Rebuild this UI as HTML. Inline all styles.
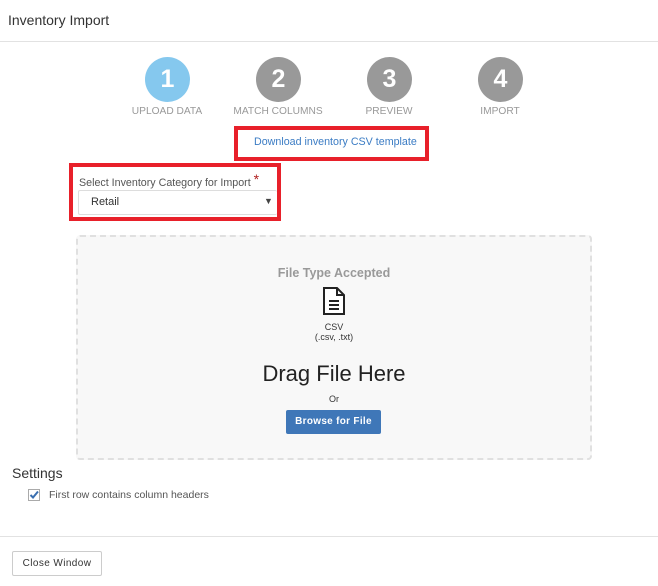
<html><head><style>
body{margin:0;width:658px;height:586px;background:#fff;font-family:"Liberation Sans",sans-serif;position:relative;overflow:hidden}
.a{position:absolute}
.c{width:45px;height:45px;border-radius:50%;background:#999;color:#fff;font-size:25px;font-weight:bold;text-align:center;line-height:45px}
.l{font-size:10.2px;color:#999;text-align:center;width:120px}
</style></head><body>
<div class="a" style="left:8px;top:12px;font-size:14px;color:#333">Inventory Import</div>
<div class="a" style="left:0;top:41px;width:658px;height:1px;background:#e2e2e2"></div>
<div class="a c" style="left:145px;top:57px;background:#85c8ee">1</div>
<div class="a c" style="left:256px;top:57px">2</div>
<div class="a c" style="left:367px;top:57px">3</div>
<div class="a c" style="left:478px;top:57px">4</div>
<div class="a l" style="left:107px;top:106px">UPLOAD DATA</div>
<div class="a l" style="left:218px;top:106px">MATCH COLUMNS</div>
<div class="a l" style="left:329px;top:106px">PREVIEW</div>
<div class="a l" style="left:440px;top:106px">IMPORT</div>
<div class="a" style="left:234px;top:126px;width:187px;height:27px;border:4px solid #e8202a"></div>
<div class="a" style="left:254px;top:136px;font-size:10.7px;color:#3b7cc4">Download inventory CSV template</div>
<div class="a" style="left:69px;top:163px;width:204px;height:50px;border:4px solid #e8202a"></div>
<div class="a" style="left:79px;top:173px;font-size:10.7px;color:#555">Select Inventory Category for Import <span style="color:#b02020;font-size:14px;position:relative;top:-2px">*</span></div>
<div class="a" style="left:78px;top:190px;width:198px;height:23px;border:1px solid #ddd;border-right:none;border-radius:2px;background:#fff"></div>
<div class="a" style="left:91px;top:196px;font-size:11px;color:#333">Retail</div>
<div class="a" style="left:264px;top:196px;font-size:9px;color:#444">▼</div>
<div class="a" style="left:76px;top:235px;width:512px;height:221px;border:2px dashed #e0e0e0;border-radius:4px;background:#f8f8f8"></div>
<div class="a" style="left:76px;top:266px;width:516px;text-align:center;font-size:12.5px;color:#999;font-weight:bold">File Type Accepted</div>
<svg class="a" style="left:322px;top:287px" width="24" height="28" viewBox="0 0 24 28"><path d="M2 1H15L22 8V27H2Z M15 1V8H22" fill="#fff" stroke="#222" stroke-width="2"/><path d="M7 14H17M7 18H17M7 22H17" stroke="#222" stroke-width="2"/></svg>
<div class="a" style="left:76px;top:322px;width:516px;text-align:center;font-size:9px;color:#333;line-height:10px">CSV<br>(.csv, .txt)</div>
<div class="a" style="left:76px;top:361px;width:516px;text-align:center;font-size:22px;color:#222">Drag File Here</div>
<div class="a" style="left:76px;top:394px;width:516px;text-align:center;font-size:9px;color:#333">Or</div>
<div class="a" style="left:286px;top:410px;width:95px;height:24px;background:#3f77b8;border-radius:2px;color:#fff;font-size:10px;font-weight:bold;text-align:center;line-height:24px;letter-spacing:.3px">Browse for File</div>
<div class="a" style="left:12px;top:465px;font-size:14px;color:#333">Settings</div>
<div class="a" style="left:28px;top:489px;width:10px;height:10px;border:1px solid #aaa;background:#fff"></div>
<svg class="a" style="left:29px;top:490px" width="10" height="10"><path d="M1.5 5L4 7.5L9 1.5" stroke="#3a6fb0" stroke-width="2" fill="none"/></svg>
<div class="a" style="left:49px;top:489px;font-size:10.5px;color:#555">First row contains column headers</div>
<div class="a" style="left:0;top:536px;width:658px;height:1px;background:#e2e2e2"></div>
<div class="a" style="left:12px;top:551px;width:88px;height:23px;border:1px solid #ccc;border-radius:2px;font-size:10px;color:#333;text-align:center;line-height:23px;letter-spacing:.4px">Close Window</div>
</body></html>
